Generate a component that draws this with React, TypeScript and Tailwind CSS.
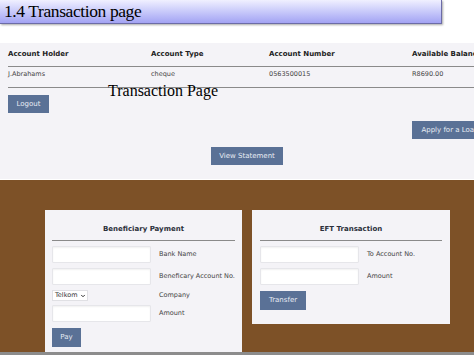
import { ChevronDown } from 'lucide-react';

const btn =
  'bg-[#5a7196] text-[#e8ecf4] text-[7px] leading-none flex items-center justify-center shrink-0';

function Field({ label }: { label: string }) {
  return (
    <div className="flex items-center h-[17px]">
      <div className="w-[99px] h-[17px] bg-white border border-[#e6e6ea] shadow-[inset_0_1px_2px_rgba(0,0,0,0.06)] rounded-[1px]" />
      <span className="ml-[8px] text-[6.5px] text-[#444]">{label}</span>
    </div>
  );
}

export default function App() {
  return (
    <div
      className="w-[474px] h-[355px] overflow-hidden bg-white relative"
      style={{ fontFamily: '"DejaVu Sans", Verdana, sans-serif' }}
    >
      <div className="w-[442px] h-[24px] bg-gradient-to-b from-[#f0f0ff] to-[#a3a3f3] border-r border-b border-[#6c6ca6] shadow-[1px_1px_2px_rgba(0,0,0,0.35)] flex items-center pl-[4px]">
        <span
          className="text-[17.5px] leading-none tracking-[-0.4px] text-black mt-[1px]"
          style={{ fontFamily: '"Liberation Serif", "Times New Roman", serif' }}
        >
          1.4 Transaction page
        </span>
      </div>

      <div className="mt-[19px] h-[136px] bg-[#f4f3f7] pl-[8px] overflow-hidden">
        <div className="w-[520px]">
          <div className="h-[23px] grid grid-cols-[143px_118px_143px_116px] items-center text-[7px] font-bold text-[#222]">
            <span>Account Holder</span>
            <span>Account Type</span>
            <span>Account Number</span>
            <span className="whitespace-nowrap">Available Balance</span>
          </div>
          <div className="h-px bg-[#8a8a8a]" />
          <div className="h-[20px] pt-[3px] grid grid-cols-[143px_118px_143px_116px] text-[6.5px] leading-[8px] text-[#444]">
            <span>J.Abrahams</span>
            <span>cheque</span>
            <span>0563500015</span>
            <span>R8690.00</span>
          </div>
          <div className="h-px bg-[#8a8a8a]" />
        </div>

        <div className="flex items-start mt-[7px]">
          <div className={`${btn} w-[41px] h-[18px]`}>Logout</div>
          <span
            className="ml-[59px] -mt-[12px] text-[16px] leading-none text-black"
            style={{ fontFamily: '"Liberation Serif", "Times New Roman", serif' }}
          >
            Transaction Page
          </span>
        </div>

        <div className="flex mt-[8px] pl-[404px] w-[600px]">
          <div className={`${btn} w-[76px] h-[18px] whitespace-nowrap`}>Apply for a Loan</div>
        </div>

        <div className="flex mt-[8px] pl-[203px]">
          <div className={`${btn} w-[72px] h-[18px]`}>View Statement</div>
        </div>
      </div>

      <div className="mt-[1px] h-[175px] bg-[#7d5127] flex items-start gap-[10px] pl-[45px] pt-[30px]">
        <div className="w-[197px] h-[150px] bg-[#f4f3f7] px-[7px]">
          <div className="h-[30px] flex items-end justify-center pb-[7px] text-[7px] leading-none font-bold text-[#2b2f3a]">
            Beneficiary Payment
          </div>
          <div className="h-px bg-[#8a8a8a]" />
          <div className="mt-[5px] flex flex-col gap-[5px]">
            <Field label="Bank Name" />
            <Field label="Beneficary Account No." />
          </div>
          <div className="flex items-center mt-[5px] h-[11px]">
            <div className="w-[36px] h-[11px] bg-white border border-[#e0e0e4] flex items-center justify-between pl-[2px] pr-[1px] text-[6.5px] text-[#333]">
              <span>Telkom</span>
              <ChevronDown className="w-[6px] h-[6px]" strokeWidth={4} />
            </div>
            <span className="ml-[71px] text-[6.5px] text-[#444]">Company</span>
          </div>
          <div className="mt-[4px]">
            <Field label="Amount" />
          </div>
          <div className={`${btn} mt-[6px] w-[29px] h-[19px]`}>Pay</div>
        </div>

        <div className="w-[198px] h-[114px] bg-[#f4f3f7] px-[8px]">
          <div className="h-[30px] flex items-end justify-center pb-[7px] text-[7px] leading-none font-bold text-[#2b2f3a]">
            EFT Transaction
          </div>
          <div className="h-px bg-[#8a8a8a]" />
          <div className="mt-[5px] flex flex-col gap-[5px]">
            <Field label="To Account No." />
            <Field label="Amount" />
          </div>
          <div className={`${btn} mt-[6px] w-[46px] h-[19px]`}>Transfer</div>
        </div>
      </div>

      <div className="absolute left-0 bottom-0 w-full h-[3px] bg-[#8c8c8c]" />
    </div>
  );
}
